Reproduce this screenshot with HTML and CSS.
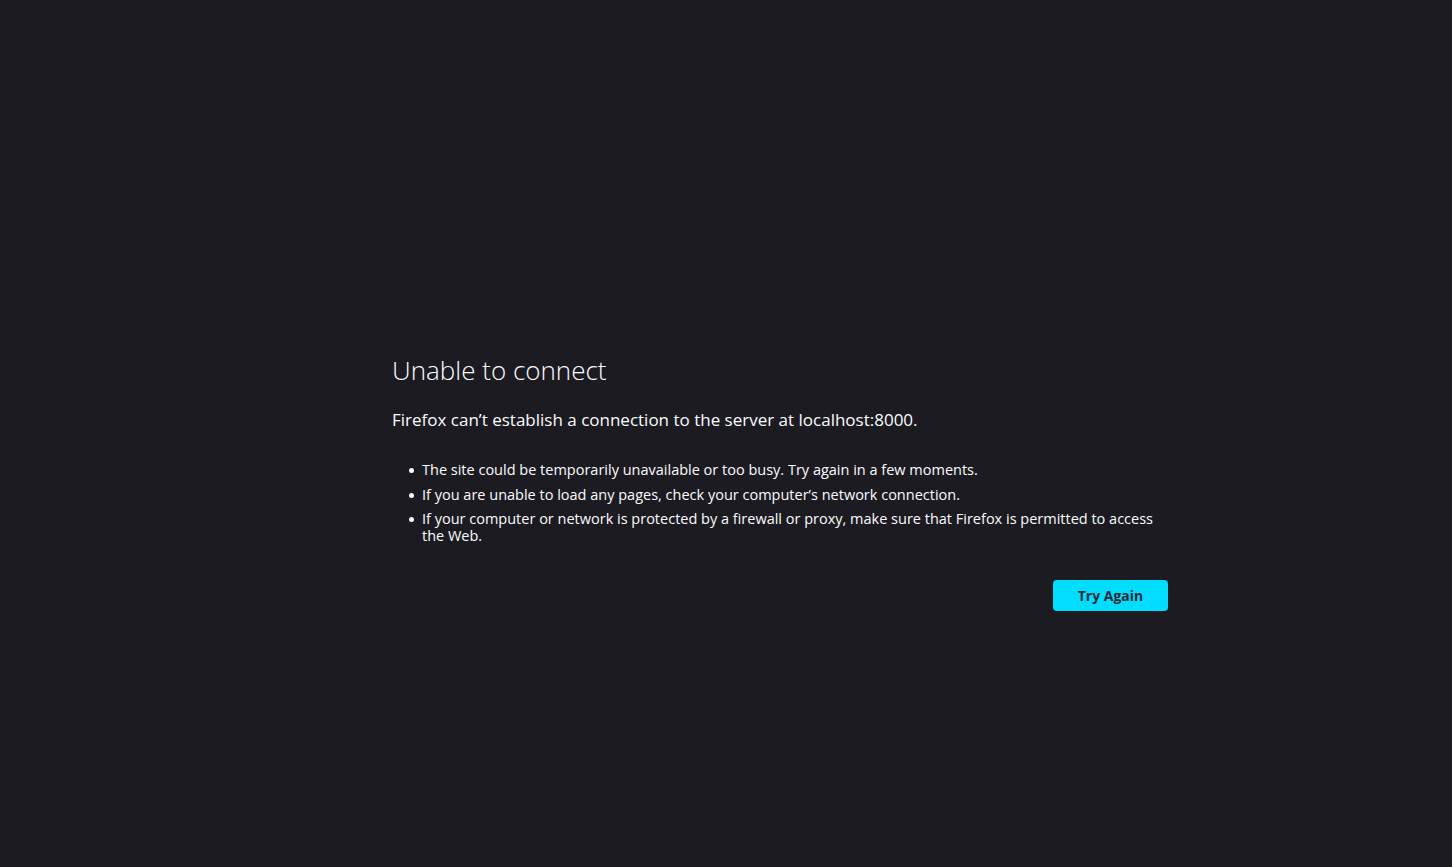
FILE: index.html
```html
<!DOCTYPE html>
<html lang="en">
<head>
<meta charset="utf-8">
<title>Problem loading page</title>
<link rel="stylesheet" href="styles.css">
</head>
<body>
<main class="container">
  <h1 class="title">Unable to connect</h1>
  <p class="intro">Firefox can’t establish a connection to the server at localhost:8000.</p>
  <ul class="tips">
    <li>The site could be temporarily unavailable or too busy. Try again in a few moments.</li>
    <li>If you are unable to load any pages, check your computer’s network connection.</li>
    <li>If your computer or network is protected by a firewall or proxy, make sure that Firefox is permitted to access the Web.</li>
  </ul>
  <div class="actions">
    <button class="retry" type="button">Try Again</button>
  </div>
</main>
</body>
</html>
```
FILE: styles.css
```css
html, body {
  margin: 0;
  padding: 0;
  background: #1c1b22;
  color: #fbfbfe;
  font-family: "Open Sans", "Noto Sans", sans-serif;
}
body {
  min-height: 100vh;
}
.container {
  width: 776px;
  margin-left: 392px;
  padding-top: 352px;
}
.title {
  margin: 0;
  font-size: 26px;
  font-weight: 300;
  line-height: 36px;
}
.intro {
  margin: 20px 0 0;
  font-size: 17px;
  line-height: 24px;
}
.tips {
  margin: 29px 0 0;
  padding-left: 30px;
  list-style: none;
  font-size: 14.5px;
  line-height: 17px;
}
.tips li {
  position: relative;
  margin-bottom: 7.5px;
}
.tips li::before {
  content: "";
  position: absolute;
  left: -13px;
  top: 7px;
  width: 5px;
  height: 5px;
  border-radius: 50%;
  background: #fbfbfe;
}
.actions {
  display: flex;
  justify-content: flex-end;
  margin-top: 36px;
}
.retry {
  width: 115px;
  height: 31px;
  border: none;
  border-radius: 4px;
  background: #00ddff;
  color: #2b2a33;
  font-family: inherit;
  font-size: 14px;
  font-weight: 700;
}
```
